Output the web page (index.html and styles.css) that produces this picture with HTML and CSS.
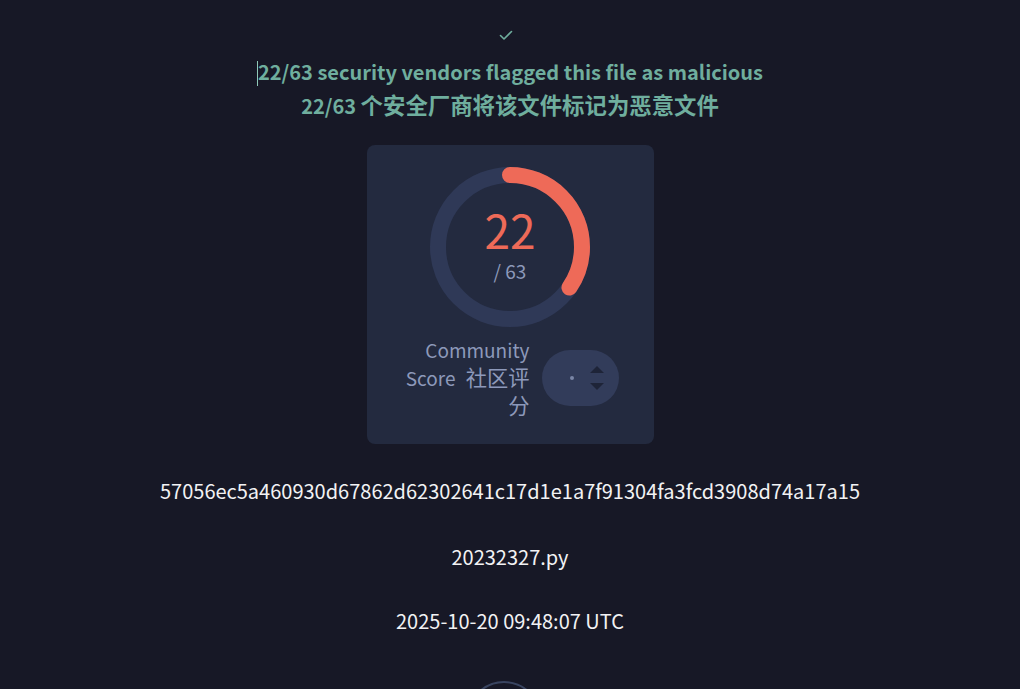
FILE: index.html
```html
<!DOCTYPE html>
<html lang="zh-CN">

<head>
    <meta charset="UTF-8">
    <meta name="viewport" content="width=device-width, initial-scale=1.0">
    <title>File report</title>

    <link rel="stylesheet" href="styles.css">
</head>

<body>
    <div class="report">
        <!-- Status check -->
        <svg class="check-icon" width="16" height="16" viewBox="0 0 16 16">
            <path d="M2.5 8.5 L6 12 L13.5 4.5" fill="none" stroke="#6fae9e" stroke-width="1.6" stroke-linecap="round" stroke-linejoin="round" />
        </svg>

        <h1 class="verdict">
            <span class="line"><span class="caret"></span>22/63 security vendors flagged this file as malicious</span>
            <span class="line">22/63 <span class="cjk">个安全厂商将该文件标记为恶意文件</span></span>
        </h1>

        <!-- Detection score card -->
        <div class="score-card">
            <div class="ring">
                <svg width="160" height="160" viewBox="0 0 160 160">
                    <circle cx="80" cy="80" r="72" fill="none" stroke="#2f3957" stroke-width="16" />
                    <circle cx="80" cy="80" r="72" fill="none" stroke="#ee6a58" stroke-width="16"
                        stroke-linecap="round" stroke-dasharray="156 452.4" transform="rotate(-90 80 80)" />
                </svg>
                <div class="ring-text">
                    <div class="positives">22</div>
                    <div class="total">/ 63</div>
                </div>
            </div>

            <div class="community">
                <div class="community-label">Community Score <span class="cjk">社区评分</span></div>
                <div class="vote-pill">
                    <span class="vote-dot"></span>
                    <span class="vote-arrows">
                        <svg width="16" height="30" viewBox="0 0 16 30">
                            <path d="M1 10 L8 3 L15 10 Z" fill="#1e2438" />
                            <path d="M1 20 L8 27 L15 20 Z" fill="#1e2438" />
                        </svg>
                    </span>
                </div>
            </div>
        </div>

        <div class="file-hash">57056ec5a460930d67862d62302641c17d1e1a7f91304fa3fcd3908d74a17a15</div>
        <div class="file-name">20232327.py</div>
        <div class="file-date">2025-10-20 09:48:07 UTC</div>

        <div class="more-circle"></div>
    </div>
</body>

</html>
```

FILE: styles.css
```css
/* Page */
body {
    margin: 0;
    background-color: #171826;
    font-family: "Noto Sans CJK SC", "Noto Sans", sans-serif;
    height: 689px;
    overflow: hidden;
}

.report {
    display: flex;
    flex-direction: column;
    align-items: center;
    padding-top: 26px;
}

.check-icon {
    display: block;
    margin-left: -8px;
    margin-top: 1px;
}

/* Chinese runs sit a little larger than the latin text */
.cjk {
    font-size: 1.12em;
}

/* Verdict heading */
.verdict {
    margin: 13px 0 0;
    display: flex;
    flex-direction: column;
    align-items: center;
    font-size: 20px;
    line-height: 32px;
    font-weight: 700;
    color: #6fae9e;
}

.verdict .line {
    height: 32px;
}

.verdict .caret {
    display: inline-block;
    width: 0;
    height: 25px;
    border-left: 1.5px solid #8fc9b8;
    vertical-align: -6px;
}

/* Score card */
.score-card {
    margin-top: 25px;
    width: 287px;
    box-sizing: border-box;
    padding: 22px 0 25px;
    background-color: #232a3f;
    border-radius: 8px;
    display: flex;
    flex-direction: column;
    align-items: center;
}

.ring {
    position: relative;
    width: 160px;
    height: 160px;
}

.ring svg {
    display: block;
}

.ring-text {
    position: absolute;
    inset: 0;
    display: flex;
    flex-direction: column;
    align-items: center;
    justify-content: center;
    padding-bottom: 7px;
}

.positives {
    font-size: 46px;
    line-height: 48px;
    color: #ee6a58;
}

.total {
    margin-top: 6px;
    font-size: 19px;
    line-height: 24px;
    color: #8d99ba;
}

.community {
    margin-top: 9px;
    display: flex;
    align-items: center;
    gap: 12px;
}

.community-label {
    width: 128px;
    text-align: right;
    font-size: 19px;
    line-height: 27px;
    color: #8d99ba;
}

.community-label .cjk {
    margin-left: 6px;
}

.vote-pill {
    width: 77px;
    height: 56px;
    border-radius: 28px;
    background-color: #323c5a;
    display: flex;
    align-items: center;
    padding-left: 28px;
    box-sizing: border-box;
    gap: 15px;
}

.vote-dot {
    width: 4px;
    height: 4px;
    border-radius: 50%;
    background-color: #7a86a6;
}

.vote-arrows svg {
    display: block;
}

/* File details */
.file-hash,
.file-name,
.file-date {
    color: #f2f2f4;
    font-size: 20px;
    line-height: 28px;
}

.file-hash {
    margin-top: 33px;
}

.file-name {
    margin-top: 38px;
}

.file-date {
    margin-top: 36px;
}

.more-circle {
    margin-top: 46px;
    margin-left: -12px;
    width: 70px;
    height: 70px;
    border-radius: 50%;
    border: 2px solid #3a4561;
    flex-shrink: 0;
}
```
